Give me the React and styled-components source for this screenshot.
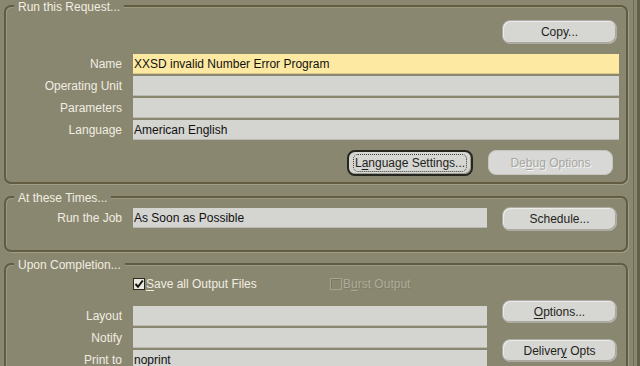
import React from 'react';
import styled, { createGlobalStyle } from 'styled-components';

const Global = createGlobalStyle`
  html, body { margin: 0; padding: 0; background: #8a8771; }
  body { font-family: "Liberation Sans", Arial, sans-serif; font-size: 12px; }
  * { box-sizing: border-box; }
`;

const Window = styled.div`
  width: 640px;
  height: 366px;
  overflow: hidden;
  display: flex;
  background: #8a8771;
`;

const Content = styled.div`
  width: 633px;
  padding: 5px 0 0 4px;
  display: flex;
  flex-direction: column;
`;

const Edge = styled.div`
  width: 7px;
  border-left: 1px solid #6f6c56;
  border-right: 3px solid #63604a;
`;

const Frame = styled.section`
  position: relative;
  width: 624px;
  height: ${p => p.$h ? `${p.$h}px` : 'auto'};
  flex: ${p => p.$h ? 'none' : '1'};
  margin-bottom: ${p => p.$mb || 0}px;
  border: 2px solid #615c42;
  border-radius: 7px;
  box-shadow: 1px 1px 0 rgba(190, 186, 160, 0.45), inset 1px 1px 0 rgba(190, 186, 160, 0.35);
`;

const Title = styled.div`
  position: absolute;
  top: -7px;
  left: 8px;
  padding: 0 4px;
  background: #8a8771;
  color: #f1eee0;
  line-height: 14px;
`;

const ButtonRow = styled.div`
  display: flex;
  justify-content: flex-end;
  gap: ${p => p.$gap || 0}px;
  margin-top: ${p => p.$mt || 0}px;
  padding-right: ${p => p.$pr || 0}px;
`;

const Button = styled.div`
  position: relative;
  width: ${p => p.$w || 115}px;
  height: ${p => p.$h || 24}px;
  display: flex;
  align-items: center;
  justify-content: center;
  border-radius: 8px;
  background: ${p => p.$disabled ? '#d8d8d6' : '#d6d6d3'};
  border: 1px solid ${p => p.$disabled ? '#c6c5be' : '#aeaca2'};
  box-shadow: ${p => p.$disabled ? 'none' : 'inset -1px -1px 0 #a9a89f, inset 1px 1px 0 #ececea'};
  color: ${p => p.$disabled ? '#a6a6a2' : '#1f1f1c'};
  text-shadow: ${p => p.$disabled ? '1px 1px 0 #f4f4f2' : 'none'};
  white-space: pre;
  ${p => p.$focused && `
    border: 2px solid #26261f;
    box-shadow: inset -1px -1px 0 #9f9e96;
    &::after {
      content: '';
      position: absolute;
      inset: 2px 4px 2px 4px;
      border: 1px dotted #3a3a33;
      border-radius: 5px;
    }
  `}
`;

const FieldGrid = styled.div`
  display: grid;
  grid-template-columns: 116px 1fr;
  column-gap: 11px;
  row-gap: 2px;
  margin-top: ${p => p.$mt || 0}px;
  padding-right: ${p => p.$pr || 0}px;
`;

const Label = styled.div`
  text-align: right;
  color: #f0ede0;
  line-height: 21px;
  height: 20px;
`;

const Field = styled.div`
  height: 20px;
  line-height: 20px;
  padding-left: 1px;
  background: ${p => p.$yellow ? '#fde9a1' : '#d4d4d1'};
  border-bottom: 1px solid ${p => p.$yellow ? '#d9c98c' : '#b9b8b1'};
  color: #111;
  white-space: nowrap;
  overflow: hidden;
`;

const JobRow = styled.div`
  display: flex;
  align-items: flex-start;
  margin-top: 9px;
`;

const JobField = styled(Field)`
  width: 354px;
  margin: 1px 15px 0 0;
`;

const JobLabel = styled(Label)`
  width: 116px;
  margin: 1px 11px 0 0;
`;

const CheckRow = styled.div`
  display: flex;
  align-items: center;
  height: 14px;
  margin-top: 12px;
  padding-left: 127px;
`;

const Check = styled.label`
  display: flex;
  align-items: center;
  gap: 1px;
  width: ${p => p.$w || 'auto'};
  color: ${p => p.$disabled ? '#aeab96' : '#f0ede0'};
  text-shadow: ${p => p.$disabled ? '1px 1px 0 rgba(120,117,98,0.6)' : 'none'};
  white-space: pre;
`;

const Box = styled.span`
  width: 12px;
  height: 12px;
  display: flex;
  align-items: center;
  justify-content: center;
  background: ${p => p.$disabled ? 'transparent' : '#ebe9dd'};
  border: 1px solid ${p => p.$disabled ? '#a6a38e' : '#2c2b22'};
  box-shadow: ${p => p.$disabled ? 'inset 1px 1px 0 #7a775f' : 'none'};
`;

const Split = styled.div`
  display: flex;
  align-items: flex-start;
`;

const LeftCol = styled(FieldGrid)`
  width: 481px;
  grid-template-columns: 116px 354px;
`;

const RightCol = styled.div`
  display: flex;
  flex-direction: column;
  gap: 16px;
  margin: 9px 0 0 15px;
`;

const U = styled.span`
  text-decoration: underline;
  text-underline-offset: 2px;
`;

export default function App() {
  return (
    <Window>
      <Global />
      <Content>
        <Frame $h={179} $mb={12}>
          <Title>Run this Request...</Title>
          <ButtonRow $mt={13} $pr={9}>
            <Button $w={115} $h={24}>Copy...</Button>
          </ButtonRow>
          <FieldGrid $mt={10} $pr={7}>
            <Label>Name</Label>
            <Field $yellow>XXSD invalid Number Error Program</Field>
            <Label>Operating Unit</Label>
            <Field />
            <Label>Parameters</Label>
            <Field />
            <Label>Language</Label>
            <Field>American English</Field>
          </FieldGrid>
          <ButtonRow $mt={10} $pr={13} $gap={15}>
            <Button $focused $w={126} $h={26}><span>L<U>a</U>nguage Settings...</span></Button>
            <Button $disabled $w={125} $h={25}><span>De<U>b</U>ug Options</span></Button>
          </ButtonRow>
        </Frame>

        <Frame $h={56} $mb={11}>
          <Title>At these Times...</Title>
          <JobRow>
            <JobLabel>Run the Job</JobLabel>
            <JobField>As Soon as Possible</JobField>
            <Button $w={115} $h={24}>Schedule...</Button>
          </JobRow>
        </Frame>

        <Frame>
          <Title>Upon Completion...</Title>
          <CheckRow>
            <Check $w="197px">
              <Box>
                <svg width="10" height="10" viewBox="0 0 10 10">
                  <path d="M1.5 5 L4 7.8 L8.8 1.5" fill="none" stroke="#111" strokeWidth="2" />
                </svg>
              </Box>
              <span><U>S</U>ave all Output Files</span>
            </Check>
            <Check $disabled>
              <Box $disabled />
              <span>B<U>u</U>rst Output</span>
            </Check>
          </CheckRow>
          <Split>
            <LeftCol $mt={15}>
              <Label>Layout</Label>
              <Field />
              <Label>Notify</Label>
              <Field />
              <Label>Print to</Label>
              <Field>noprint</Field>
            </LeftCol>
            <RightCol>
              <Button $w={115} $h={23}><span><U>O</U>ptions...</span></Button>
              <Button $w={115} $h={23}><span>Deliver<U>y</U> Opts</span></Button>
            </RightCol>
          </Split>
        </Frame>
      </Content>
      <Edge />
    </Window>
  );
}
